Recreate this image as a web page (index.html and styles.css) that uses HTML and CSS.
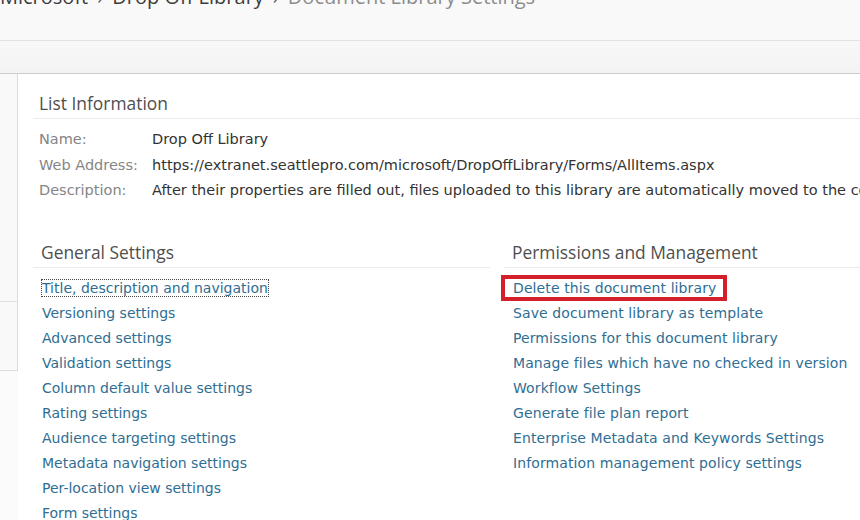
FILE: index.html
```html
<!DOCTYPE html>
<html lang="en">

<head>
    <meta charset="UTF-8">
    <title>Document Library Settings</title>
    <link rel="stylesheet" href="styles.css">
</head>

<body>
    <div class="top">
        <div class="crumbs">
            <span class="crumb">Microsoft</span>
            <span class="sep">&#8250;</span>
            <span class="crumb">Drop Off Library</span>
            <span class="sep">&#8250;</span>
            <span class="here">Document Library Settings</span>
        </div>
    </div>
    <div class="ribbon"></div>
    <div class="main">
        <div class="quick">
            <div class="quick-top"></div>
        </div>
        <div class="content">
            <div class="info">
                <h2 class="head">List Information</h2>
                <div class="rows">
                    <div class="row"><span class="lbl">Name:</span><span class="val">Drop Off Library</span></div>
                    <div class="row"><span class="lbl">Web Address:</span><span class="val">https://extranet.seattlepro.com/microsoft/DropOffLibrary/Forms/AllItems.aspx</span></div>
                    <div class="row"><span class="lbl">Description:</span><span class="val">After their properties are filled out, files uploaded to this library are automatically moved to the correct library or folder.</span></div>
                </div>
            </div>
            <div class="cols">
                <div class="col">
                    <h2 class="head">General Settings</h2>
                    <ul class="links">
                        <li><a class="focus" href="#">Title, description and navigation</a></li>
                        <li><a href="#">Versioning settings</a></li>
                        <li><a href="#">Advanced settings</a></li>
                        <li><a href="#">Validation settings</a></li>
                        <li><a href="#">Column default value settings</a></li>
                        <li><a href="#">Rating settings</a></li>
                        <li><a href="#">Audience targeting settings</a></li>
                        <li><a href="#">Metadata navigation settings</a></li>
                        <li><a href="#">Per-location view settings</a></li>
                        <li><a href="#">Form settings</a></li>
                    </ul>
                </div>
                <div class="col">
                    <h2 class="head">Permissions and Management</h2>
                    <ul class="links">
                        <li><a class="flag" href="#">Delete this document library</a></li>
                        <li><a href="#">Save document library as template</a></li>
                        <li><a href="#">Permissions for this document library</a></li>
                        <li><a href="#">Manage files which have no checked in version</a></li>
                        <li><a href="#">Workflow Settings</a></li>
                        <li><a href="#">Generate file plan report</a></li>
                        <li><a href="#">Enterprise Metadata and Keywords Settings</a></li>
                        <li><a href="#">Information management policy settings</a></li>
                    </ul>
                </div>
            </div>
        </div>
    </div>
</body>

</html>
```

FILE: styles.css
```css
* {
    margin: 0;
    padding: 0;
    box-sizing: border-box;
}

html,
body {
    width: 860px;
    height: 520px;
    overflow: hidden;
}

body {
    background: #fbfbfb;
    font-family: "DejaVu Sans", Verdana, sans-serif;
    font-size: 14px;
    color: #333;
    white-space: nowrap;
}

.top {
    height: 41px;
    background: #f9f9f9;
    border-bottom: 1px solid #e2e2e2;
    overflow: hidden;
}

.crumbs {
    margin: -17px 0 0 0;
    font-family: "Open Sans", sans-serif;
    font-size: 20px;
    line-height: 27px;
    display: flex;
    gap: 9px;
}

.crumb {
    color: #3c3c3c;
}

.sep {
    color: #555;
}

.here {
    color: #8c8c8c;
}

.ribbon {
    height: 33px;
    background: linear-gradient(#f8f8f8, #f3f3f3);
    border-bottom: 1px solid #cdcdcd;
}

.main {
    display: flex;
    height: 446px;
}

.quick {
    width: 18px;
    height: 297px;
    flex: none;
    background: #f9f9f9;
    border-right: 1px solid #dcdcdc;
    border-bottom: 1px solid #dcdcdc;
}

.quick-top {
    height: 228px;
    border-bottom: 1px solid #e2e2e2;
}

.content {
    flex: 1;
    background: #fff;
    padding: 18px 0 0 15px;
}

.head {
    font-family: "Open Sans", sans-serif;
    font-weight: normal;
    font-size: 17.4px;
    line-height: 22px;
    color: #4f4f4f;
    padding: 0 0 4px 6px;
    border-bottom: 1px solid #ebebeb;
}

.rows {
    padding-top: 8px;
    font-size: 14.5px;
}

.row {
    display: flex;
    line-height: 25.5px;
}

.lbl {
    width: 119px;
    flex: none;
    padding-left: 6px;
    color: #858585;
}

.cols {
    display: grid;
    grid-template-columns: 457px 1fr;
    gap: 14px;
    margin-top: 37px;
}

.col .head {
    padding-left: 8px;
}

.links {
    list-style: none;
    padding: 8px 0 0 9px;
}

.links li {
    line-height: 25px;
}

.links a {
    color: #2f6e93;
    text-decoration: none;
}

.col + .col .links a {
    letter-spacing: 0.1px;
}

.focus {
    outline: 1px dotted #444;
}

.flag {
    position: relative;
}

.flag::after {
    content: "";
    position: absolute;
    top: -5px;
    bottom: -5px;
    left: -12px;
    right: -11px;
    border: 4px solid #d3202b;
}
```
